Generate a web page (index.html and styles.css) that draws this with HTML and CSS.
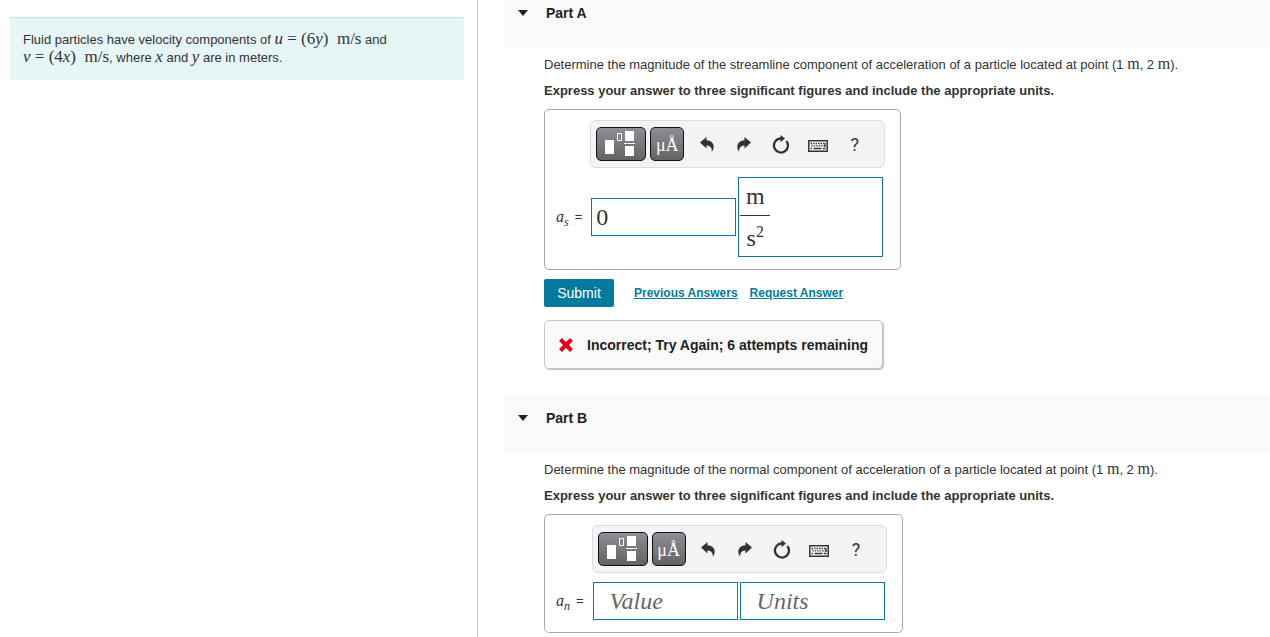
FILE: index.html
```html
<!DOCTYPE html>
<html lang="en">
<head>
    <meta charset="UTF-8">
    <meta name="viewport" content="width=device-width, initial-scale=1.0">
    <title>Streamline Acceleration</title>
    <link rel="stylesheet" href="styles.css">
</head>
<body>
    <!-- shared toolbar icons -->
    <svg class="icon-defs" aria-hidden="true">
        <symbol id="icon-template" viewBox="0 0 32 28">
            <path fill="#fff" d="M0 10h9v14H0zM20 1h9v10h-9zM20 16h9v10h-9zM19 13h11v1H19z"/>
            <path fill="none" stroke="#fff" d="M12.500 3.500h4v7h-4z"/>
        </symbol>
        <symbol id="icon-undo" viewBox="0 0 14 15">
            <path fill="#333" d="M0 5.500L6.500 0v3.200c4.500.2 7.200 3 7.200 6.600 0 2-.8 3.700-2 5 .5-3.600-1-6.200-5.200-6.400v3z"/>
        </symbol>
        <symbol id="icon-redo" viewBox="0 0 14 15">
            <path fill="#333" d="M14 5.500L7.500 0v3.200C3 3.400.3 6.200.3 9.800c0 2 .8 3.700 2 5-.5-3.600 1-6.200 5.200-6.400v3z"/>
        </symbol>
        <symbol id="icon-reset" viewBox="0 0 18 19">
            <path fill="none" stroke="#333" stroke-width="2.300" d="M14.300 6A7 7 0 1 1 9 3.500"/>
            <path fill="#333" d="M8.500 0l4.500 3.600-4.500 3.600z"/>
        </symbol>
        <symbol id="icon-keyboard" viewBox="0 0 20 16">
            <path fill="#fff" stroke="#333" stroke-width="1.500" d="M.8 4.700h18.400v10.600H.8z"/>
            <path stroke="#333" stroke-width="1.300" stroke-dasharray="1.500 1" d="M2.500 7.500h15M3.200 9.800h14"/>
            <path stroke="#333" stroke-width="1.300" d="M2.500 12.500H4M5.500 12.500h8M15 12.500h2.500M17 7v4"/>
        </symbol>
    </svg>

    <div class="layout">
        <aside class="problem-pane">
            <div class="problem-text">
                <p>Fluid particles have velocity components of <span class="math"><i>u</i> = (6<i>y</i>)&ensp;m/s</span> and</p>
                <p><span class="math"><i>v</i> = (4<i>x</i>)&ensp;m/s</span>, where <span class="math"><i>x</i></span> and <span class="math"><i>y</i></span> are in meters.</p>
            </div>
        </aside>

        <main class="parts">
            <section class="part">
                <button type="button" class="part-header"><span class="caret"></span>Part A</button>
                <div class="part-body">
                    <p>Determine the magnitude of the streamline component of acceleration of a particle located at point (1 <span class="unit">m</span>, 2 <span class="unit">m</span>).</p>
                    <p class="instructions">Express your answer to three significant figures and include the appropriate units.</p>

                    <div class="answer-box">
                        <div class="toolbar">
                            <button type="button" class="tool-dark wide" aria-label="Templates"><svg width="32" height="28"><use href="#icon-template"/></svg></button>
                            <button type="button" class="tool-dark" aria-label="Symbols">μÅ</button>
                            <button type="button" class="tool" aria-label="Undo"><svg width="14" height="15"><use href="#icon-undo"/></svg></button>
                            <button type="button" class="tool" aria-label="Redo"><svg width="14" height="15"><use href="#icon-redo"/></svg></button>
                            <button type="button" class="tool" aria-label="Reset"><svg width="18" height="19"><use href="#icon-reset"/></svg></button>
                            <button type="button" class="tool" aria-label="Keyboard"><svg width="20" height="16"><use href="#icon-keyboard"/></svg></button>
                            <button type="button" class="tool">?</button>
                        </div>
                        <label class="answer-label" for="valueA"><i>a<sub>s</sub></i> <span>=</span></label>
                        <div class="fields">
                            <input type="text" id="valueA" class="field" value="0">
                            <div class="field units-field" contenteditable="true" role="textbox" aria-label="Units">
                                <div class="fraction">
                                    <span class="numerator">m</span>
                                    <span class="denominator">s<sup>2</sup></span>
                                </div>
                            </div>
                        </div>
                    </div>

                    <div class="actions">
                        <button type="submit" class="submit-btn">Submit</button>
                        <a href="#">Previous Answers</a>
                        <a href="#">Request Answer</a>
                    </div>

                    <div class="feedback">
                        <svg width="14" height="14" viewBox="0 0 14 14"><path stroke="#e0001b" stroke-width="4.200" d="M1.500 1.500l11 11M12.500 1.500l-11 11"/></svg>
                        <span>Incorrect; Try Again; 6 attempts remaining</span>
                    </div>
                </div>
            </section>

            <section class="part">
                <button type="button" class="part-header"><span class="caret"></span>Part B</button>
                <div class="part-body">
                    <p>Determine the magnitude of the normal component of acceleration of a particle located at point (1 <span class="unit">m</span>, 2 <span class="unit">m</span>).</p>
                    <p class="instructions">Express your answer to three significant figures and include the appropriate units.</p>

                    <div class="answer-box">
                        <div class="toolbar">
                            <button type="button" class="tool-dark wide" aria-label="Templates"><svg width="32" height="28"><use href="#icon-template"/></svg></button>
                            <button type="button" class="tool-dark" aria-label="Symbols">μÅ</button>
                            <button type="button" class="tool" aria-label="Undo"><svg width="14" height="15"><use href="#icon-undo"/></svg></button>
                            <button type="button" class="tool" aria-label="Redo"><svg width="14" height="15"><use href="#icon-redo"/></svg></button>
                            <button type="button" class="tool" aria-label="Reset"><svg width="18" height="19"><use href="#icon-reset"/></svg></button>
                            <button type="button" class="tool" aria-label="Keyboard"><svg width="20" height="16"><use href="#icon-keyboard"/></svg></button>
                            <button type="button" class="tool">?</button>
                        </div>
                        <label class="answer-label" for="valueB"><i>a<sub>n</sub></i> <span>=</span></label>
                        <div class="fields">
                            <input type="text" id="valueB" class="field" placeholder="Value">
                            <input type="text" class="field" placeholder="Units" aria-label="Units">
                        </div>
                    </div>
                </div>
            </section>
        </main>
    </div>
</body>
</html>
```
FILE: styles.css
```css
* {
    margin: 0;
    padding: 0;
    box-sizing: border-box;
}

body {
    background: #fff;
    color: #333;
    font-family: "Liberation Sans", Arial, sans-serif;
    font-size: 13px;
    line-height: 18px;
}

button {
    border: none;
    background: none;
    color: inherit;
    font-family: inherit;
    cursor: pointer;
}

.icon-defs {
    display: none;
}

.layout {
    display: grid;
    grid-template-columns: 478fr 792fr;
    min-height: 100vh;
}

/* left pane */
.problem-pane {
    padding: 17px 13px 17px 10px;
    border-right: 1px solid #c3c8d0;
}

.problem-text {
    padding: 13px;
    background: #e6f6f6;
    border-top: 1px solid #cfdfe0;
}

.math, .unit {
    font-family: "Liberation Serif", "Times New Roman", serif;
    font-size: 17px;
    line-height: 16px;
}

.unit {
    font-size: 16px;
}

/* right pane */
.parts {
    padding-left: 26px;
}

.part-header {
    display: flex;
    align-items: flex-start;
    gap: 18px;
    width: 100%;
    height: 57px;
    padding: 14px;
    background: #f9f9f9;
    color: #222;
    font-size: 14px;
    font-weight: bold;
    line-height: 18px;
}

.part:first-child .part-header {
    height: 47px;
    padding-top: 4px;
}

.caret {
    margin-top: 6px;
    border: 5px solid transparent;
    border-top: 6px solid #222;
    border-bottom: 0;
}

.part-body {
    padding: 9px 40px 26px;
}

.part:last-child .part-body {
    padding-bottom: 4px;
}

.instructions {
    margin: 8px 0 9px;
    font-weight: bold;
}

.answer-box {
    display: inline-grid;
    grid-template-columns: auto auto;
    column-gap: 8px;
    row-gap: 9px;
    align-items: center;
    padding: 10px 15px 12px 11px;
    border: 1px solid #a9a9a9;
    border-radius: 5px;
    vertical-align: top;
}

.toolbar {
    grid-column: 2;
    display: flex;
    align-items: center;
    height: 48px;
    padding: 0 5px;
    background: #f4f4f4;
    border: 1px solid #ddd;
    border-radius: 6px;
}

.tool-dark {
    width: 34px;
    height: 34px;
    margin-right: 4px;
    background: linear-gradient(#8f8d96, #636363);
    border: 1px solid #111;
    border-radius: 5px;
    color: #fff;
    font-family: "Liberation Serif", serif;
    font-size: 18px;
    line-height: 34px;
}

.tool-dark.wide {
    width: 50px;
}

.tool-dark svg {
    display: block;
    margin: 0 auto;
}

.tool {
    display: flex;
    align-items: center;
    justify-content: center;
    width: 37px;
    height: 34px;
    color: #333;
    font-family: Roboto, sans-serif;
    font-size: 18px;
}

.answer-label {
    display: flex;
    align-items: center;
    gap: 6px;
    font-size: 13px;
}

.answer-label i {
    font-family: "Liberation Serif", serif;
    font-size: 16px;
}

.answer-label sub {
    font-size: 12px;
    line-height: 8px;
}

.fields {
    display: flex;
    align-items: center;
    gap: 2px;
    padding: 0 2px 0 1px;
}

.field {
    width: 145px;
    height: 38px;
    padding: 0 4px;
    background: #fff;
    border: 1px solid #047a9c;
    color: #333;
    font-family: "Liberation Serif", serif;
    font-size: 24px;
}

.field::placeholder {
    color: #666;
    font-style: italic;
    text-indent: 12px;
}

.units-field {
    height: 80px;
    padding: 4px 1px;
}

.fraction {
    display: inline-flex;
    flex-direction: column;
    width: 30px;
    text-align: center;
    line-height: 28px;
}

.numerator {
    padding-bottom: 5px;
    border-bottom: 1px solid #333;
}

.denominator {
    padding-top: 8px;
}

.denominator sup {
    font-size: 16px;
    line-height: 12px;
}

.actions {
    display: flex;
    align-items: center;
    gap: 12px;
    margin: 9px 0 13px;
}

.actions a {
    color: #047a9c;
    font-size: 12px;
    font-weight: bold;
}

.submit-btn {
    width: 70px;
    height: 28px;
    margin-right: 8px;
    background: #047a9c;
    border-radius: 2px;
    color: #fff;
    font-size: 14px;
}

.feedback {
    display: inline-flex;
    align-items: center;
    gap: 14px;
    height: 49px;
    padding: 0 14px;
    background: #f9f9f9;
    border: 1px solid #c7c7c7;
    border-radius: 5px;
    box-shadow: 1px 1px 1px #bbb;
    color: #222;
    font-size: 14px;
    font-weight: bold;
    vertical-align: top;
}
```
